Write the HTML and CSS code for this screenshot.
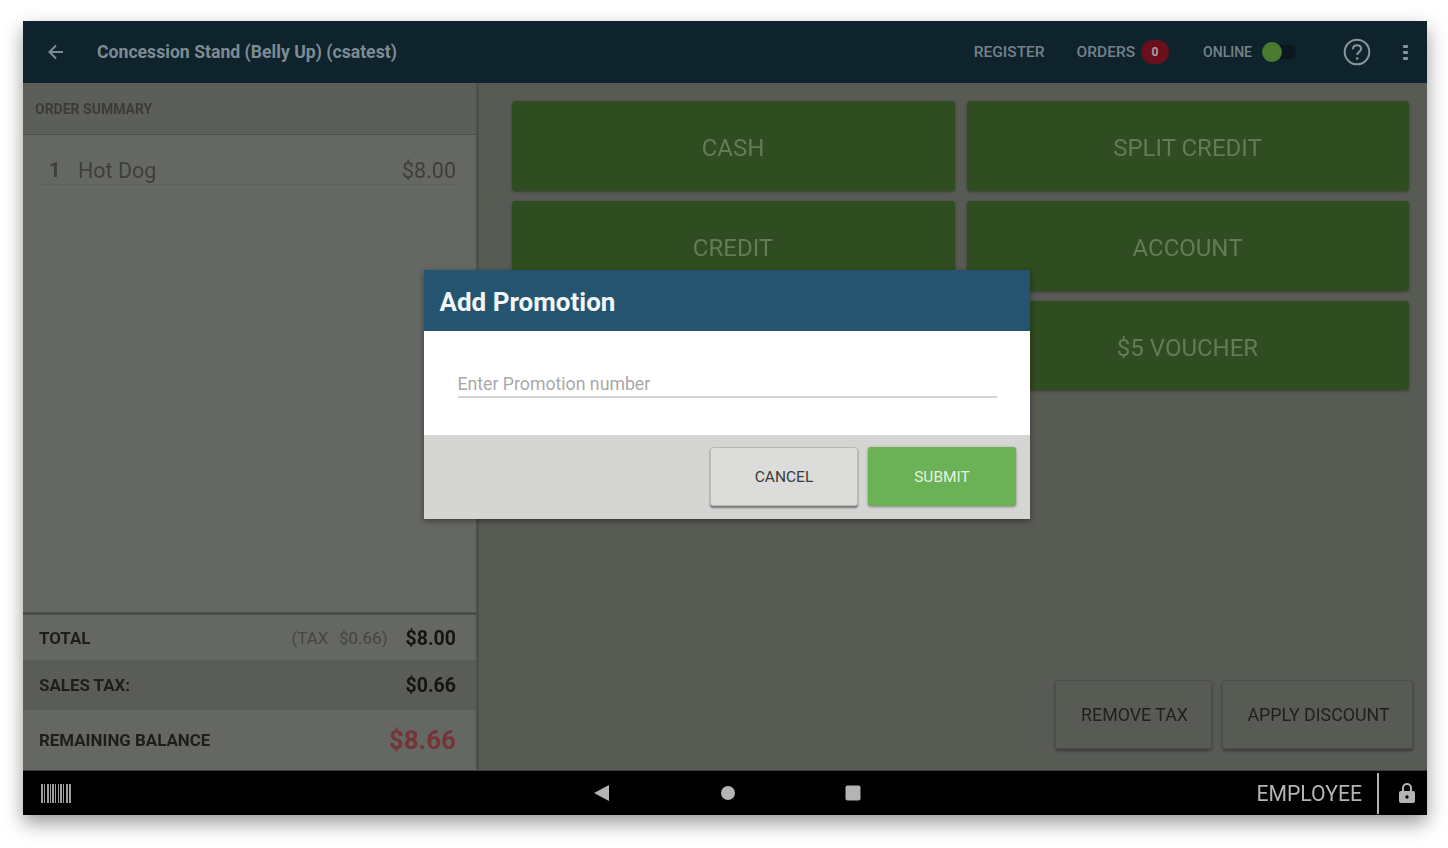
FILE: index.html
```html
<!DOCTYPE html>
<html lang="en">
<head>
    <meta charset="UTF-8">
    <meta name="viewport" content="width=device-width, initial-scale=1.0">
    <title>Add Promotion</title>
    <link rel="stylesheet" href="styles.css">
</head>
<body>
    <div class="screen">
        <header class="topbar">
            <svg class="back-icon" width="20" height="20" viewBox="0 0 20 20"><path d="M17 10H4M10 3.500L3.500 10l6.500 6.500" fill="none" stroke="#7d8c93" stroke-width="2"/></svg>
            <h1 class="title">Concession Stand (Belly Up) (csatest)</h1>
            <nav class="topnav">
                <span class="nav-register">REGISTER</span>
                <span class="nav-orders">ORDERS</span>
                <span class="badge">0</span>
                <span class="nav-online">ONLINE</span>
                <span class="switch"><span class="knob"></span></span>
                <svg class="help-icon" width="28" height="28" viewBox="0 0 28 28">
                    <circle cx="14" cy="14" r="12.300" fill="none" stroke="#8b9599" stroke-width="2"/>
                    <path d="M10 11.200c0-2.500 1.800-4 4.100-4s4 1.500 4 3.600c0 3-3.900 3.100-3.900 6.100" fill="none" stroke="#8b9599" stroke-width="2"/>
                    <circle cx="14.200" cy="20.500" r="1.300" fill="#8b9599"/>
                </svg>
                <span class="dots"><i></i><i></i><i></i></span>
            </nav>
        </header>

        <div class="content">
            <aside class="summary">
                <div class="summary-head">ORDER SUMMARY</div>
                <div class="items">
                    <div class="item">
                        <span class="qty">1</span>
                        <span class="item-name">Hot Dog</span>
                        <span class="item-price">$8.00</span>
                    </div>
                </div>
                <div class="totals">
                    <div class="row row-total">
                        <span class="label">TOTAL</span>
                        <span class="tax-note">(TAX &nbsp;$0.66)</span>
                        <span class="amount">$8.00</span>
                    </div>
                    <div class="row row-tax">
                        <span class="label">SALES TAX:</span>
                        <span class="amount">$0.66</span>
                    </div>
                    <div class="row row-balance">
                        <span class="label">REMAINING BALANCE</span>
                        <span class="balance">$8.66</span>
                    </div>
                </div>
            </aside>

            <main class="payment">
                <div class="pay-grid">
                    <div class="pay-btn">CASH</div>
                    <div class="pay-btn">SPLIT CREDIT</div>
                    <div class="pay-btn">CREDIT</div>
                    <div class="pay-btn">ACCOUNT</div>
                    <div class="pay-spacer"></div>
                    <div class="pay-btn">$5 VOUCHER</div>
                </div>
                <div class="actions">
                    <div class="action-btn action-tax">REMOVE TAX</div>
                    <div class="action-btn action-discount">APPLY DISCOUNT</div>
                </div>
            </main>
        </div>

        <footer class="navbar">
            <div class="barcode">
                <i class="w2"></i><i></i><i class="w2"></i><i></i><i class="w2"></i><i></i><i></i><i class="w2"></i><i></i><i class="w2"></i><i class="w2"></i>
            </div>
            <div class="softkeys">
                <svg width="16" height="16" viewBox="0 0 16 16"><path d="M15 0v16L0 8z" fill="#b4b4b4"/></svg>
                <svg width="16" height="16" viewBox="0 0 16 16"><circle cx="8" cy="8" r="7" fill="#b4b4b4"/></svg>
                <svg width="16" height="16" viewBox="0 0 16 16"><rect x="0.500" y="0.500" width="15" height="15" rx="2" fill="#b4b4b4"/></svg>
            </div>
            <div class="user">
                <span class="employee">EMPLOYEE</span>
                <span class="user-sep"></span>
                <svg width="18" height="22" viewBox="0 0 18 22">
                    <path d="M5 9V6a4 4 0 0 1 8 0v3" fill="none" stroke="#b4b4b4" stroke-width="2"/>
                    <rect x="1" y="9" width="16" height="12" rx="2" fill="#b4b4b4"/>
                    <circle cx="9" cy="15" r="1.700" fill="#000"/>
                </svg>
            </div>
        </footer>

        <div class="dialog">
            <div class="dialog-head">Add Promotion</div>
            <div class="dialog-body">
                <div class="promo-field">Enter Promotion number</div>
            </div>
            <div class="dialog-foot">
                <div class="btn btn-cancel">CANCEL</div>
                <div class="btn btn-submit">SUBMIT</div>
            </div>
        </div>
    </div>
</body>
</html>
```

FILE: styles.css
```css
body {
    margin: 0;
    padding: 21px 21px 33px 23px;
    background-color: #fff;
    font-family: Roboto, "Liberation Sans", sans-serif;
}

/* Device screen */
.screen {
    position: relative;
    width: 1404px;
    height: 794px;
    display: flex;
    flex-direction: column;
    background-color: #585a54;
    box-shadow: 0 8px 18px rgba(0, 0, 0, 0.4);
    filter: blur(0.4px);
}

/* Top bar */
.topbar {
    height: 62px;
    flex-shrink: 0;
    display: flex;
    align-items: center;
    background-color: #0f232d;
    padding-left: 23px;
    box-sizing: border-box;
}

.title {
    margin: 0 0 0 31px;
    font-size: 17.650px;
    font-weight: 700;
    color: #7d8c93;
}

.topnav {
    margin-left: auto;
    display: flex;
    align-items: center;
    font-size: 15.500px;
    font-weight: 500;
    color: #74828a;
}

.nav-orders {
    margin-left: 32px;
}

.badge {
    width: 28px;
    height: 24px;
    margin-left: 6px;
    border-radius: 12px;
    background-color: #6b0f1d;
    color: #a9a0a0;
    font-size: 12px;
    font-weight: 700;
    line-height: 24px;
    text-align: center;
}

.nav-online {
    margin-left: 34px;
    font-size: 14px;
}

.switch {
    width: 34px;
    height: 14px;
    margin-left: 10px;
    border-radius: 7px;
    background-color: #0a171e;
    display: flex;
    align-items: center;
}

.knob {
    width: 20px;
    height: 20px;
    border-radius: 50%;
    background-color: #4a7a2f;
}

.help-icon {
    margin-left: 47px;
}

.dots {
    width: 5px;
    margin: 0 19px 0 32px;
    display: flex;
    flex-direction: column;
    gap: 3px;
}

.dots i {
    height: 3px;
    border-radius: 1px;
    background-color: #8b9599;
}

/* Main area */
.content {
    flex: 1;
    display: flex;
    min-height: 0;
}

.summary {
    width: 453px;
    flex-shrink: 0;
    display: flex;
    flex-direction: column;
    background-color: #656763;
    border-right: 3px solid #4d4f4b;
}

.summary-head {
    height: 52px;
    padding-left: 12px;
    box-sizing: border-box;
    background-color: #5c5e5a;
    border-bottom: 1px solid #4e504c;
    font-size: 14px;
    font-weight: 700;
    line-height: 53px;
    color: #3a3c39;
}

.items {
    flex: 1;
    padding: 13px 20px 0 15px;
}

.item {
    height: 37px;
    display: flex;
    align-items: center;
    box-sizing: border-box;
    padding-top: 8px;
    border-bottom: 1px solid #5e605c;
    font-size: 21.500px;
    color: #3d3f3c;
}

.qty {
    width: 10px;
    margin-left: 11px;
    font-size: 20px;
    font-weight: 700;
}

.item-name {
    margin-left: 19px;
}

.item-price {
    margin-left: auto;
}

.totals {
    border-top: 3px solid #4a4c48;
    flex-shrink: 0;
}

.row {
    display: flex;
    align-items: center;
    padding: 0 20px 0 16px;
}

.row-total {
    height: 45px;
}

.row-tax {
    height: 50px;
    background-color: #5a5c58;
}

.row-balance {
    height: 60px;
}

.label {
    font-size: 16.900px;
    font-weight: 700;
    color: #1d1e1c;
}

.tax-note {
    margin-left: auto;
    margin-right: 18px;
    font-size: 17px;
    word-spacing: 1px;
    color: #434541;
}

.amount {
    margin-top: 1px;
    font-size: 19.500px;
    font-weight: 700;
    color: #141513;
}

.row-tax .amount {
    margin-left: auto;
}

.balance {
    margin-left: auto;
    font-size: 26px;
    font-weight: 700;
    color: #743438;
}

/* Payment buttons */
.payment {
    flex: 1;
    display: flex;
    flex-direction: column;
    justify-content: space-between;
    padding: 18px 18px 21px 33px;
}

.pay-grid {
    display: grid;
    grid-template-columns: 443px 442px;
    grid-template-rows: 90px 90px 89px;
    gap: 10px 12px;
}

.pay-btn {
    display: flex;
    align-items: center;
    justify-content: center;
    box-sizing: border-box;
    padding-top: 4px;
    padding-right: 1px;
    border-radius: 4px;
    background-color: #2f4d20;
    box-shadow: 0 1px 3px rgba(0, 0, 0, 0.35);
    font-size: 24px;
    color: #647a58;
}

.actions {
    display: flex;
    justify-content: flex-end;
    gap: 10px;
}

.action-btn {
    height: 69px;
    display: flex;
    align-items: center;
    justify-content: center;
    box-sizing: border-box;
    border: 1px solid #4c4e49;
    border-radius: 3px;
    box-shadow: 0 2px 3px rgba(0, 0, 0, 0.35);
    padding-left: 2px;
    font-size: 17.800px;
    color: #1f201e;
}

.action-tax {
    width: 157px;
}

.action-discount {
    width: 191px;
    margin-right: -4px;
}

/* Bottom bar */
.navbar {
    height: 45px;
    flex-shrink: 0;
    display: flex;
    align-items: center;
    justify-content: space-between;
    background-color: #000;
    border-top: 1px solid #3c3c3c;
    box-sizing: border-box;
    padding: 0 11px 0 18px;
}

.barcode {
    width: 30px;
    height: 19px;
    display: flex;
    justify-content: space-between;
}

.barcode i {
    width: 1px;
    background-color: #a0a0a0;
}

.barcode .w2 {
    width: 2px;
}

.softkeys {
    position: absolute;
    left: 571px;
    width: 267px;
    display: flex;
    justify-content: space-between;
}

.user {
    display: flex;
    align-items: center;
}

.employee {
    font-size: 21.200px;
    color: #b4b4b4;
}

.user-sep {
    width: 2px;
    height: 41px;
    margin: 0 19px 0 15px;
    background-color: #b4b4b4;
}

/* Dialog */
.dialog {
    position: absolute;
    left: 401px;
    top: 249px;
    width: 606px;
    box-shadow: 0 2px 6px rgba(0, 0, 0, 0.4);
}

.dialog-head {
    height: 61px;
    padding-left: 15.500px;
    box-sizing: border-box;
    background-color: #24546f;
    font-size: 26px;
    font-weight: 700;
    line-height: 64px;
    color: #f2f6f8;
}

.dialog-body {
    height: 104px;
    padding: 33px 33px 0 33.500px;
    box-sizing: border-box;
    background-color: #fff;
}

.promo-field {
    height: 34px;
    box-sizing: border-box;
    border-bottom: 2px solid #d4d4d4;
    font-size: 17.700px;
    line-height: 41px;
    color: #a9a9a9;
}

.dialog-foot {
    height: 84px;
    display: flex;
    justify-content: flex-end;
    gap: 10px;
    padding: 12px 14px 0 0;
    box-sizing: border-box;
    background-color: #d5d6d4;
}

.btn {
    width: 148px;
    height: 59px;
    display: flex;
    align-items: center;
    justify-content: center;
    box-sizing: border-box;
    border-radius: 3px;
    font-size: 15.500px;
}

.btn-cancel {
    background-color: #dcdddb;
    border: 1px solid #b9bab8;
    box-shadow: 0 2px 2px rgba(0, 0, 0, 0.45);
    color: #3a3b3a;
}

.btn-submit {
    background-color: #6bb156;
    box-shadow: 0 1px 3px rgba(0, 0, 0, 0.4);
    color: #e4f2df;
}
```
